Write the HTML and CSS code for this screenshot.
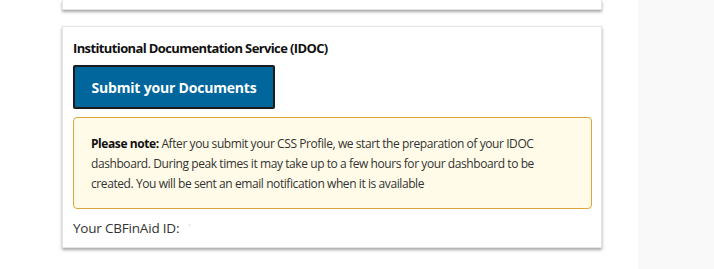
FILE: index.html
```html
<!DOCTYPE html>
<html lang="en">
<head>
    <meta charset="UTF-8">
    <meta name="viewport" content="width=device-width, initial-scale=1.0">
    <title>IDOC</title>
    <link rel="stylesheet" href="styles.css">
</head>
<body>
    <div class="page">
        <main class="content">
            <!-- Tarjeta anterior (cortada arriba) -->
            <div class="card card-cut"></div>

            <!-- Tarjeta IDOC -->
            <section class="card">
                <h2 class="card-title">Institutional Documentation Service (IDOC)</h2>
                <button class="submit-btn">Submit your Documents</button>
                <div class="note">
                    <p><strong>Please note:</strong> After you submit your CSS Profile, we start the preparation of your IDOC dashboard. During peak times it may take up to a few hours for your dashboard to be created. You will be sent an email notification when it is available</p>
                </div>
                <p class="finaid-id">Your CBFinAid ID: <span class="id-value">'</span></p>
            </section>
        </main>
        <aside class="side"></aside>
    </div>
</body>
</html>
```

FILE: styles.css
```css
* {
    margin: 0;
    padding: 0;
    box-sizing: border-box;
    font-family: 'Open Sans', 'Noto Sans', sans-serif;
}

body {
    background-color: white;
    height: 269px;
    overflow: hidden;
}

.page {
    display: flex;
    height: 269px;
}

.content {
    width: 638px;
    padding-left: 62px;
    display: flex;
    flex-direction: column;
    gap: 16px;
}

.side {
    flex: 1;
    background-color: #f9f9f9;
}

.card {
    width: 540px;
    background-color: white;
    border: 1px solid #e4e4e4;
    box-shadow: 0 2px 3px rgba(0,0,0,0.35);
    padding: 11px 10px 9px 10px;
}

.card-cut {
    height: 10px;
    border-top: none;
    padding: 0;
}

.card-title {
    font-size: 13px;
    font-weight: 700;
    color: #111;
    line-height: 20px;
    letter-spacing: -0.62px;
}

.submit-btn {
    display: block;
    margin-top: 7px;
    width: 202px;
    height: 44px;
    background-color: #00669c;
    color: white;
    border: 2px solid #1b1b1b;
    border-radius: 2px;
    font-size: 14px;
    font-weight: 700;
    letter-spacing: -0.2px;
    cursor: pointer;
}

.note {
    margin-top: 8px;
    width: 519px;
    background-color: #fffbe8;
    border: 1px solid #dea63a;
    border-radius: 4px;
    padding: 16px 40px 14px 17px;
}

.note p {
    font-size: 12px;
    line-height: 20px;
    color: #333;
    letter-spacing: -0.42px;
}

.note strong {
    color: #111;
}

.finaid-id {
    margin-top: 9px;
    font-size: 13.5px;
    line-height: 20px;
    color: #333;
    letter-spacing: -0.2px;
}

.id-value {
    color: #f3c9a8;
    font-size: 9px;
    vertical-align: top;
    margin-left: 6px;
}
```
